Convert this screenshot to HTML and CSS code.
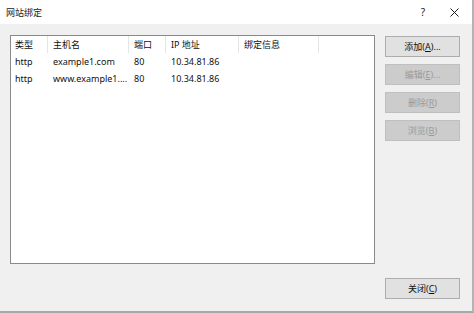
FILE: index.html
```html
<!DOCTYPE html>
<html>
<head>
<meta charset="utf-8">
<link rel="stylesheet" href="styles.css">
</head>
<body>
<div class="window">
  <div class="titlebar">
    <span class="title">网站绑定</span>
    <span class="help">?</span>
    <span class="close-x"><svg width="9" height="9" viewBox="0 0 9 9"><path d="M0.5 0.5L8.5 8.5M8.5 0.5L0.5 8.5" stroke="#222" stroke-width="1" fill="none"/></svg></span>
  </div>
  <div class="content">
    <div class="main">
      <div class="list">
        <div class="row head">
          <div class="c c1">类型</div>
          <div class="c c2">主机名</div>
          <div class="c c3">端口</div>
          <div class="c c4">IP 地址</div>
          <div class="c c5">绑定信息</div>
        </div>
        <div class="row">
          <div class="c c1">http</div>
          <div class="c c2">example1.com</div>
          <div class="c c3">80</div>
          <div class="c c4">10.34.81.86</div>
          <div class="c c5"></div>
        </div>
        <div class="row">
          <div class="c c1">http</div>
          <div class="c c2">www.example1....</div>
          <div class="c c3">80</div>
          <div class="c c4">10.34.81.86</div>
          <div class="c c5"></div>
        </div>
      </div>
      <div class="side">
        <button class="btn">添加(<u>A</u>)...</button>
        <button class="btn disabled">编辑(<u>E</u>)...</button>
        <button class="btn disabled">删除(<u>R</u>)</button>
        <button class="btn disabled">浏览(<u>B</u>)</button>
      </div>
    </div>
    <div class="footer">
      <button class="btn">关闭(<u>C</u>)</button>
    </div>
  </div>
</div>
</body>
</html>
```
FILE: styles.css
```css
html, body {
  margin: 0;
  padding: 0;
  background: #f0f0f0;
}
body {
  font-family: "Noto Sans", "Noto Sans CJK SC", sans-serif;
  font-size: 9px;
  color: #111;
}
.window {
  width: 474px;
  height: 313px;
  box-sizing: border-box;
  background: #f0f0f0;
  border-bottom: 2px solid #a8a8a8;
  border-right: 2px solid #b4b4b4;
  display: flex;
  flex-direction: column;
}
.titlebar {
  height: 24px;
  background: #fff;
  display: flex;
  align-items: center;
  padding-left: 6px;
  flex: none;
}
.title {
  flex: 1;
  color: #222;
}
.help {
  width: 10px;
  text-align: center;
  margin-right: 12px;
  font-size: 10px;
  color: #222;
  flex: none;
}
.close-x {
  width: 29px;
  display: flex;
  justify-content: center;
  margin-right: 3px;
  flex: none;
}
.content {
  flex: 1;
  display: flex;
  flex-direction: column;
  padding: 11px 12px 0 10px;
}
.main {
  display: flex;
  gap: 10px;
}
.list {
  width: 365px;
  height: 229px;
  box-sizing: border-box;
  border: 1px solid #8a8a8a;
  background: #fff;
}
.row {
  display: flex;
  height: 17px;
  align-items: center;
}
.c {
  box-sizing: border-box;
  padding-left: 4px;
  white-space: nowrap;
  overflow: hidden;
  height: 100%;
  display: flex;
  align-items: center;
}
.head .c {
  border-right: 1px solid #e5e5e5;
}
.c1 { width: 37px; }
.c2 { width: 81px; }
.c3 { width: 37px; }
.c4 { width: 73px; }
.c5 { width: 80px; }
.c2, .c3, .c4, .c5 { padding-left: 5px; }
.side {
  display: flex;
  flex-direction: column;
  gap: 7px;
  padding-top: 1px;
}
.btn {
  width: 75px;
  height: 21px;
  box-sizing: border-box;
  border: 1px solid #adadad;
  background: #e1e1e1;
  font-family: inherit;
  font-size: 9px;
  color: #111;
  padding: 0;
  margin: 0;
}
.btn.disabled {
  background: #cccccc;
  border-color: #bfbfbf;
  color: #9a9a9a;
}
.footer {
  display: flex;
  justify-content: flex-end;
  padding-top: 14px;
}
```
